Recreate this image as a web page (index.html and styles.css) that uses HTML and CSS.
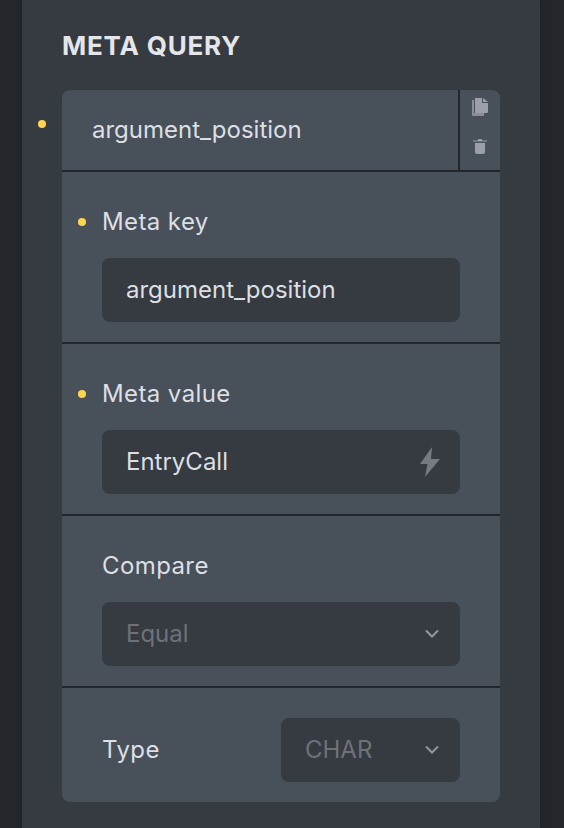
FILE: index.html
```html
<!DOCTYPE html>
<html lang="en">
<head>
    <meta charset="UTF-8">
    <meta name="viewport" content="width=device-width, initial-scale=1.0">
    <title>Meta Query</title>
    <link rel="stylesheet" href="styles.css">
</head>
<body>
    <div class="panel">
        <h2 class="panel-title">META QUERY</h2>
        <div class="repeater">
            <div class="repeater-head">
                <span class="dot dot-outer"></span>
                <div class="repeater-title">argument_position</div>
                <div class="repeater-actions">
                    <svg class="icon-copy" width="18" height="20" viewBox="0 0 18 20">
                        <path class="fill-back" d="M1 3h2v13h10v3H2a1 1 0 0 1-1-1z"/>
                        <path class="fill-front" d="M4 1h7v5h6v9a1 1 0 0 1-1 1H4.500a.5.500 0 0 1-.5-.5z"/>
                        <path class="fill-front" d="M12 1l5 4h-5z"/>
                    </svg>
                    <svg class="icon-trash" width="14" height="16" viewBox="0 0 14 16">
                        <path class="fill-front" d="M0 2.500h4.500L5.500 1h3l1 1.500H14v1H0z"/>
                        <path class="fill-front" d="M2 5h10v9a2 2 0 0 1-2 2H4a2 2 0 0 1-2-2z"/>
                    </svg>
                </div>
            </div>

            <div class="field">
                <label class="field-label"><span class="dot"></span>Meta key</label>
                <div class="input">argument_position</div>
            </div>

            <div class="field">
                <label class="field-label"><span class="dot"></span>Meta value</label>
                <div class="input">
                    EntryCall
                    <svg class="icon-bolt" width="22" height="30" viewBox="0 0 22 30">
                        <path d="M13 0L1 17h7.500L6 30 21 12h-9z"/>
                    </svg>
                </div>
            </div>

            <div class="field">
                <label class="field-label">Compare</label>
                <div class="input input-select">
                    Equal
                    <svg class="chevron" width="14" height="9" viewBox="0 0 14 9"><path d="M1 1.500l6 6 6-6"/></svg>
                </div>
            </div>

            <div class="field field-inline">
                <label class="field-label">Type</label>
                <div class="input input-select input-small">
                    CHAR
                    <svg class="chevron" width="14" height="9" viewBox="0 0 14 9"><path d="M1 1.500l6 6 6-6"/></svg>
                </div>
            </div>
        </div>
    </div>
</body>
</html>
```

FILE: styles.css
```css
html, body {
    height: 100%;
}

body {
    margin: 0;
    padding: 0 24px 0 22px;
    box-sizing: border-box;
    height: 828px;
    overflow: hidden;
    background-color: #23262a;
    font-family: Inter, "Liberation Sans", sans-serif;
    color: #dcdfe3;
}

.panel {
    height: 100%;
    box-sizing: border-box;
    padding: 31px 40px 0;
    background-color: #363a41;
    box-shadow: 0 0 6px rgba(0, 0, 0, 0.2);
}

.panel-title {
    margin: 0 0 29px;
    font-size: 26px;
    line-height: 30px;
    font-weight: 700;
    letter-spacing: 0.8px;
    color: #e4e6e9;
}

.repeater {
    background-color: #48505a;
    border-radius: 8px;
}

.repeater-head {
    position: relative;
    display: flex;
    height: 80px;
    border-bottom: 2px solid #23262b;
}

.repeater-title {
    flex: 1;
    padding: 25px 30px 0;
    font-size: 24px;
    line-height: 30px;
}

.repeater-actions {
    width: 40px;
    border-left: 2px solid #23262b;
    display: flex;
    flex-direction: column;
    align-items: center;
    padding-top: 7px;
    gap: 21px;
}

.fill-back {
    fill: #8a8f98;
}

.fill-front {
    fill: #9b9fa7;
}

.dot {
    position: absolute;
    width: 8px;
    height: 8px;
    border-radius: 50%;
    background-color: #ffd64f;
}

.dot-outer {
    left: -24px;
    top: 30px;
}

.field {
    padding: 30px 40px 20px;
    border-bottom: 2px solid #23262b;
}

.field:last-child {
    border-bottom: none;
}

.field-label {
    position: relative;
    display: block;
    margin-bottom: 16px;
    font-size: 24px;
    line-height: 40px;
    height: 40px;
    letter-spacing: 0.4px;
}

.field-label .dot {
    left: -24px;
    top: 16px;
}

.input {
    position: relative;
    height: 64px;
    box-sizing: border-box;
    padding: 0 19px 2px 24px;
    display: flex;
    align-items: center;
    justify-content: space-between;
    background-color: #363a41;
    border-radius: 8px;
    font-size: 24px;
}

.input-select {
    padding-right: 21px;
    color: #6e7278;
}

.input-small {
    width: 179px;
}

.field-inline {
    display: flex;
    align-items: center;
    justify-content: space-between;
}

.field-inline .field-label {
    margin: 0;
}

.icon-bolt {
    margin-top: 2px;
}

.icon-bolt path {
    fill: #757b80;
}

.chevron path {
    fill: none;
    stroke: #93979d;
    stroke-width: 2;
}
```
